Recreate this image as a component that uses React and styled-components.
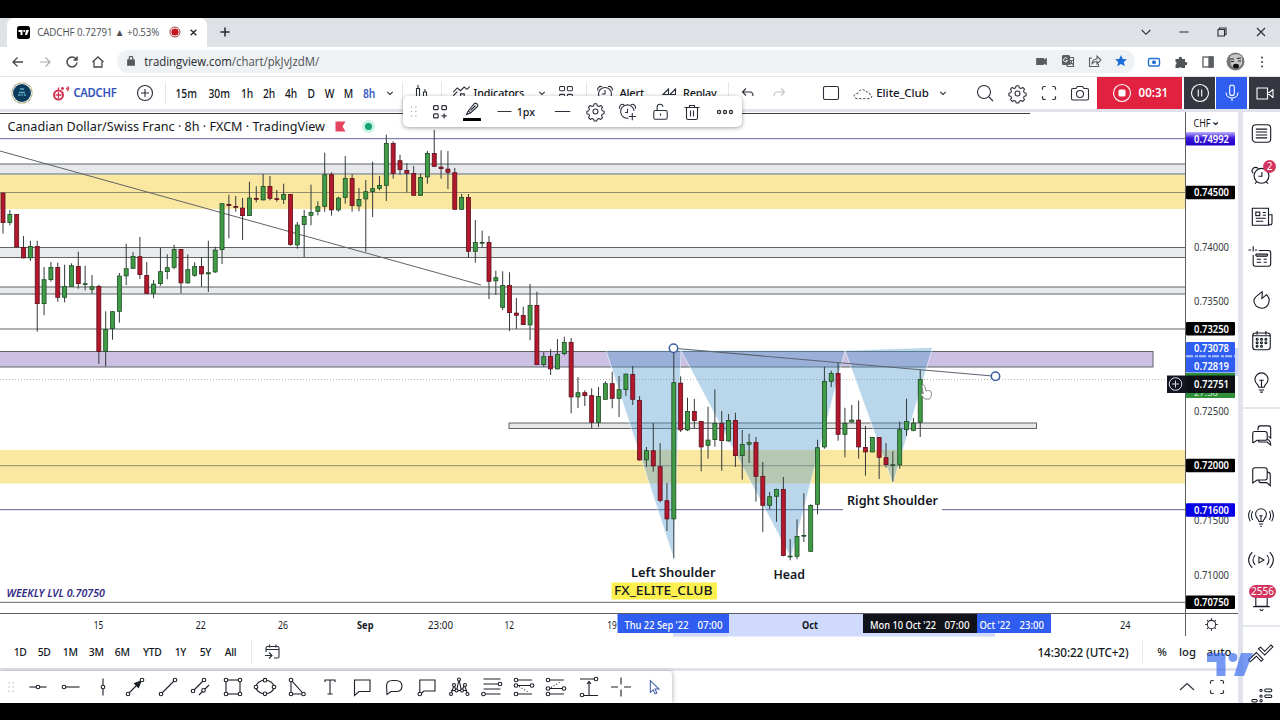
import React from "react";
import styled, { createGlobalStyle } from "styled-components";

const Global = createGlobalStyle`
  *, *::before, *::after { box-sizing: border-box; }
  html, body { margin: 0; padding: 0; background: #000; }
  body { width: 1280px; height: 720px; overflow: hidden; font-family: "Noto Sans", "Open Sans", sans-serif; color: #131722; }
`;

const Screen = styled.div`
  display: flex;
  flex-direction: column;
  width: 1280px;
  height: 720px;
  padding: 18px 0 17px;
  background: #000;
  overflow: hidden;
`;

const TabStrip = styled.header`
  display: flex;
  align-items: stretch;
  flex: 0 0 29px;
  padding-left: 7px;
  background: #dee1e5;
`;

const BrowserTab = styled.div`
  display: flex;
  align-items: center;
  flex: 0 0 200px;
  padding: 0 0 1px 10px;
  background: #fff;
  border-radius: 7px 7px 0 0;
`;

const Favicon = styled.svg`
  display: block;
  flex: none;
`;

const StripControls = styled.div`
  display: flex;
  align-items: center;
  padding-bottom: 2px;
`;

const AddressRow = styled.div`
  display: flex;
  align-items: center;
  flex: 0 0 30px;
  background: #fff;
  border-bottom: 1px solid #e4e6ea;
`;

const Omnibox = styled.div`
  display: flex;
  align-items: center;
  flex: 0 0 1018px;
  height: 23px;
  margin-left: 7px;
  padding-bottom: 1px;
  border-radius: 12px;
  background: #eff2f4;
`;

const TopBar = styled.nav`
  display: flex;
  align-items: center;
  flex: 0 0 32px;
  background: #fff;
`;

const Divider = styled.div`
  flex: 0 0 ${(p) => p.$h || 3}px;
  background: #e0e3eb;
`;

const Workspace = styled.div`
  position: relative;
  display: flex;
  flex: 1;
  min-height: 0;
`;

const MainColumn = styled.main`
  display: flex;
  flex-direction: column;
  width: 1238px;
  background: #fff;
`;

const ChartCanvas = styled.svg`
  display: block;
  flex: 0 0 525px;
  width: 1238px;
  font-family: "Noto Sans", "Open Sans", sans-serif;
`;

const RangeBar = styled.div`
  display: flex;
  align-items: center;
  flex: 0 0 31px;
  padding-bottom: 2px;
`;

const BottomTools = styled.div`
  display: flex;
  align-items: stretch;
  flex: 1;
`;

const DrawingPanel = styled.div`
  display: flex;
  align-items: center;
  flex: 0 0 672px;
  padding-left: 4px;
  border-radius: 0 4px 0 0;
  background: #fff;
  box-shadow: 1px 0 4px rgba(0, 0, 0, 0.25);
`;

const SideBar = styled.aside`
  display: flex;
  flex-direction: column;
  align-items: center;
  width: 42px;
  border-left: 5px solid #e0e3eb;
  background: #fff;
  overflow: hidden;
`;

const SideCell = styled.div`
  position: relative;
  display: flex;
  align-items: center;
  justify-content: center;
  flex: 0 0 ${(p) => p.$h}px;
  width: 37px;
  padding-right: 1px;
  border-bottom: ${(p) => (p.$line ? "2px solid #e4e7ed" : "none")};
`;

const Badge = styled.span`
  position: absolute;
  top: ${(p) => p.$top}px;
  right: ${(p) => p.$right}px;
  height: 13px;
  min-width: 13px;
  padding: 0 ${(p) => p.$pad || 0}px;
  border-radius: 7px;
  background: #d3345f;
  color: #fff;
  font-size: 10px;
  line-height: 13px;
  text-align: center;
`;

const FloatingBar = styled.div`
  position: absolute;
  left: 403px;
  top: -16px;
  z-index: 2;
  display: flex;
  align-items: center;
  width: 339px;
  height: 31px;
  background: #fff;
  border-radius: 5px;
  box-shadow: 0 1px 4px rgba(0, 0, 0, 0.38);
`;

const Watermark = styled.svg`
  position: absolute;
  left: 1207px;
  top: 540px;
  width: 46px;
  height: 25px;
  z-index: 3;
`;

const Cell = styled.div`
  display: flex;
  align-items: center;
  justify-content: center;
  flex: 0 0 ${(p) => p.$w}px;
  min-width: 0;
  margin-left: ${(p) => p.$gap || 0}px;
  height: ${(p) => (p.$bg ? "32px" : "auto")};
  background: ${(p) => p.$bg || "transparent"};
  color: ${(p) => p.$color || "#2a2e39"};
`;

const Label = styled.span`
  flex: none;
  font-family: ${(p) => (p.$browser ? '"Open Sans", "Noto Sans", sans-serif' : "inherit")};
  font-size: ${(p) => p.$size || 12}px;
  font-weight: ${(p) => p.$weight || 500};
  letter-spacing: ${(p) => p.$ls || 0}px;
  color: ${(p) => p.$color || "#131722"};
  line-height: 18px;
  white-space: pre;
  transform: scaleX(${(p) => p.$sx || 1});
`;

const Rule = styled.i`
  flex: 0 0 1px;
  height: 22px;
  margin-left: ${(p) => p.$gap}px;
  background: #e4e7ed;
`;

const Avatar = styled.div`
  display: flex;
  align-items: center;
  justify-content: center;
  width: 22px;
  height: 22px;
  border-radius: 50%;
  background: #0d3b5c;
  border: 1px solid #e9dca6;
  box-shadow: inset 0 0 0 1px #fff;
`;

const IconSvg = styled.svg`
  display: block;
  flex: none;
  overflow: visible;
  fill: none;
  stroke: currentColor;
  stroke-width: ${(p) => p.$sw || 1.1};
`;

const Dot = ({ x, y, r = 1.8 }) => <circle cx={x} cy={y} r={r} fill="#fff" />;

const glyphs = {
  back: <path d="M17 12H7M11.500 7.500 7 12l4.500 4.500" />,
  forward: <path d="M7 12h10M12.500 7.500 17 12l-4.500 4.500" />,
  reload: <path d="M16.200 9.200A5 5 0 1 0 17 12.500M17 6.500v3.500h-3.500" />,
  home: <path d="M8 11.500V17h8v-5.500M6.500 12 12 7l5.500 5" />,
  lock: (
    <g>
      <rect x="8.500" y="11" width="7" height="5.500" fill="currentColor" />
      <path d="M10 11V9a2 2 0 0 1 4 0v2" />
    </g>
  ),
  close: <path d="m8 8 8 8M16 8l-8 8" />,
  plus: <path d="M12 7v10M7 12h10" />,
  chevron: <path d="m9 10.800 3 2.800 3-2.800" />,
  wideChevron: <path d="m7.700 10 4.300 4.300L16.300 10" />,
  minus: <path d="M7.500 12h9" />,
  restore: <path d="M8 9.500h6.500V16H8zM9.500 9.500V8H16v6.500h-1.500" />,
  camcorder: <path d="M7 9h7v2l3-2v6l-3-2v2H7z" fill="currentColor" />,
  translate: (
    <g>
      <rect x="6.500" y="6.500" width="7" height="9" rx="1" fill="currentColor" />
      <path d="M13.500 8.500h4v9h-6l-1-2M14 11.500h3M15.500 11v1.500c0 1.500-1 2.500-1.500 3M14.500 13l2.500 2.500" />
      <path d="M11.300 9.800a2 2 0 1 0 .2 1.700h-1.500" stroke="#fff" strokeWidth=".9" />
    </g>
  ),
  share: <path d="M9 9H6.500v8.500h9V15M9 14.500c.5-3 2.500-4.500 5-4.500V7l4 4-4 4v-2.500c-2 0-3.500.5-5 2z" />,
  star: <path d="m12 6 1.800 3.900 4.200.4-3.200 2.800 1 4.200L12 15.100l-3.800 2.200 1-4.200L6 10.300l4.200-.4z" fill="currentColor" stroke="none" />,
  viewer: (
    <g>
      <rect x="6.500" y="8.500" width="11" height="7.500" rx="1.500" />
      <circle cx="12" cy="12.200" r="2" fill="currentColor" stroke="none" />
    </g>
  ),
  puzzle: <path d="M6.500 9h3.300a1.700 1.700 0 1 1 3.200 0H16v3a1.700 1.700 0 1 1 0 3.200V18h-3.300a1.500 1.500 0 0 0-2.700 0H6.500v-3.300a1.600 1.600 0 0 0 0-3z" fill="currentColor" stroke="none" />,
  panel: (
    <g>
      <rect x="7" y="7" width="10" height="10" />
      <rect x="13" y="7" width="4" height="10" fill="currentColor" />
    </g>
  ),
  kebab: (
    <g fill="currentColor" stroke="none">
      <circle cx="12" cy="7.500" r="1.100" /><circle cx="12" cy="12" r="1.100" /><circle cx="12" cy="16.500" r="1.100" />
    </g>
  ),
  circlePlus: (
    <g><circle cx="12" cy="12" r="7.500" /><path d="M12 8v8M8 12h8" /></g>
  ),
  candles: <path d="M6.500 7.500h3v8h-3zM8 4v3.500M8 15.500V18M13.500 11h3v5h-3zM15 8v3M15 16v3" />,
  indicators: <path d="m3.500 11 4.500-4.500 3.500 3L15.500 5.500l3 2.500L21.500 5M3.500 15l4.500-4.500M11.500 19v-6h4v6" />,
  layouts: (
    <g>
      <rect x="5" y="5" width="5.500" height="4.500" rx="1" /><rect x="13.500" y="5" width="5.500" height="4.500" rx="1" />
      <rect x="5" y="13.500" width="5.500" height="4.500" rx="1" /><rect x="13.500" y="13.500" width="5.500" height="4.500" rx="1" />
    </g>
  ),
  template: (
    <g>
      <rect x="5" y="5" width="5" height="4.500" rx="1" /><rect x="14" y="5" width="5" height="4.500" rx="1" />
      <rect x="5" y="14" width="5" height="4.500" rx="1" /><path d="M16.500 13.500v5.500M13.700 16.200h5.600" />
    </g>
  ),
  alarm: (
    <g>
      <circle cx="12" cy="13" r="6.500" /><path d="M12 9v4H9M4.800 9.500a3 3 0 0 1 4-3.800M19.200 9.500a3 3 0 0 0-4-3.800M7.500 18l-1.500 2M16.500 18l1.500 2" />
    </g>
  ),
  alarmPlus: (
    <g>
      <path d="M18.800 11.500A7 7 0 1 0 13 19M12 9v4H9.500M4 9.500a3.300 3.300 0 0 1 4.500-4.500M20 9.500A3.300 3.300 0 0 0 15.500 5M17 13.500v7.500M13.300 17.200h7.500" />
    </g>
  ),
  rewind: <path d="M11.500 8 6 13.500h5.500zM18.500 8 13 13.500h5.500z" />,
  undo: <path d="M10 7.500 6.500 11l3.500 3.500M6.500 11H14c2 0 3 1.500 3 4" />,
  redo: <path d="M14 7.500 17.500 11 14 14.500M17.500 11H10c-2 0-3 1.500-3 4" />,
  square: <rect x="4.500" y="5.500" width="15" height="13" rx="1.500" />,
  cloud: <path d="M5.500 18.500c-6-.8-5-6.500.5-6.500 1-5.500 8-6.500 10.500-2 3-.5 4.500 1 4.500 3 4 1 3.500 5-.5 5.500z" strokeDasharray="3 2" />,
  search: <g><circle cx="11" cy="11" r="6.500" /><path d="m16 16 4 4" /></g>,
  gear: (
    <g>
      <circle cx="12" cy="12" r="2.600" />
      <path d="m10.300 4.500.4-.5h2.600l.6 2 1.600.7 2-1 1.800 1.800-1 2 .7 1.600 2 .6v2.600l-2 .6-.7 1.600 1 2-1.800 1.800-2-1-1.600.7-.6 2h-2.600l-.6-2-1.600-.7-2 1-1.800-1.800 1-2-.7-1.600-2-.6v-2.600l2-.6.7-1.600-1-2 1.800-1.800 2 1 1.600-.7z" strokeLinejoin="round" />
    </g>
  ),
  fullscreen: <path d="M9 6H7.500A1.500 1.500 0 0 0 6 7.500V9M15 6h1.500A1.500 1.500 0 0 1 18 7.500V9M9 18H7.500A1.500 1.500 0 0 1 6 16.500V15M15 18h1.500a1.500 1.500 0 0 0 1.500-1.500V15" />,
  camera: <g><path d="M5 7.500h3L9.500 5.500h5l1.500 2h3A1.500 1.500 0 0 1 20.500 9v8.500A1.500 1.500 0 0 1 19 19H5a1.500 1.500 0 0 1-1.500-1.500V9A1.500 1.500 0 0 1 5 7.500z" /><circle cx="12" cy="13" r="3.500" /></g>,
  record: <g><circle cx="12" cy="12" r="8.500" /><rect x="9" y="9" width="6" height="6" rx="1" fill="currentColor" /></g>,
  pause: <g><circle cx="12" cy="12" r="8.500" /><path d="M10.300 8.500v7M13.700 8.500v7" /></g>,
  mic: <g><rect x="9.700" y="4" width="4.600" height="10.500" rx="2.300" /><path d="M6 11.500c0 7.300 12 7.300 12 0M12 17v3" /></g>,
  video: <path d="M4 7h10.500v11H4zM14.500 11.500h2l3.500-3v8l-3.500-3h-2" strokeLinejoin="round" />,
  pencil: <g><path d="m8.500 10.500 6-7a1.500 1.500 0 0 1 2 0l1 1a1.500 1.500 0 0 1 0 2l-7 6.500-4 1.500zM8.500 10.500l2 2.500M10.500 10.500l5-5" /><rect x="3" y="18" width="18" height="3" rx=".5" fill="#000" stroke="none" /></g>,
  line: <path d="M4 12h16" />,
  unlock: <g><rect x="5" y="11" width="14" height="9" rx="1.500" /><path d="M8.500 11V7.500c0-3.800 5.500-4 6-.5M12 14v2.500" /></g>,
  trash: <path d="M4.500 7.500h15M9.500 7.500v-2h5v2M6.500 7.500V18A1.500 1.500 0 0 0 8 19.500h8a1.500 1.500 0 0 0 1.500-1.500V7.500M10.500 10.500v6M13.500 10.500v6" />,
  more: <g><circle cx="5.500" cy="12" r="1.700" /><circle cx="12" cy="12" r="1.700" /><circle cx="18.500" cy="12" r="1.700" /></g>,
  grip: (
    <g fill="#a5a9b3" stroke="none">
      {[7, 12, 17].map((y) => (
        <g key={y}><rect x="9" y={y - 0.7} width="1.400" height="1.400" /><rect x="14" y={y - 0.7} width="1.400" height="1.400" /></g>
      ))}
    </g>
  ),
  list: <g><rect x="1.500" y="2" width="21" height="20" rx="4" /><path d="M5.500 7h13M5.500 10.300h13M5.500 13.700h13M5.500 17h13" /></g>,
  alarmSide: <g><circle cx="12" cy="13.500" r="8.500" /><path d="M12.500 9v5H8.500M2.500 10.500A3.500 3.500 0 0 1 8 5M6.500 20.500l-2 2M17.500 20.500l2 2" /></g>,
  news: <g><path d="M1.500 2.500h18.500V22H1.500zM20 10h4v9.500c0 3-4 3-4 0M13.500 7.500H17M13.500 10.500H17M5.500 14H17M5.500 17.500H14" /><rect x="5.500" y="7" width="4.500" height="4" /></g>,
  data: <g><path d="M9 4h11a2.500 2.500 0 0 1 2.500 2.500v13A2.500 2.500 0 0 1 20 22H5a2.500 2.500 0 0 1-2.500-2.500V9M2.500-1v6M0 3.500H-3M4.500 3.500H7M6.500 14h5M14.500 14H18M6.500 17.500h5M14.500 17.500H18" /><rect x="5.500" y="8" width="13.500" height="2.500" rx="1" fill="#999" /></g>,
  flame: <path d="M12 22a8.700 8.700 0 0 1-8.700-9c.3-4 4.500-5.500 9.500-10 .3 3 0 5-.5 8l5.500-4.500c6 6 2 15.500-5.800 15.500z" strokeLinejoin="round" />,
  calendar: <g><rect x="2" y="3.500" width="20" height="19" rx="3" /><path d="M7 1v4.500M17 1v4.500M2 6.500h20" />{[10.5, 14.5, 18.5].map((y) => [7, 12, 17].map((x) => (y === 18.5 && x === 17 ? null : <circle key={`${x}-${y}`} cx={x} cy={y} r="1.100" />)))}</g>,
  bulb: <g><path d="M9 17.500c0-3-4.500-4-4.500-9a7.500 7.500 0 0 1 15 0c0 5-4.500 6-4.500 9zM9 20.500h6M10.500 23h3M12 17.500V10M9.500 9.500h5" /></g>,
  chats: <g><path d="M8 6V4C8 2.300 9 1 10.500 1H20c1.500 0 2.500 1 2.500 2.500V15l-2.500-2" /><path d="M4 7.500h12C17.500 7.500 18.500 8.500 18.500 10v6.500c2.500.3 4 1.500 4 6.500l-4-3.500H10c-1 0-1.500-.8-1.500-1.500M2 20.500V9.500c0-1.300.7-2 2-2M2 20.500 7 17.500h9.500c1.300 0 2-1 2-2" /></g>,
  chat: <g><path d="M2 19.500V4.500C2 3 3 2 4.500 2h11.500C17.500 2 18.500 3 18.500 4.500v9c0 1.500-1 2.500-2.500 2.500H7z" /><path d="M18.500 7c2.500 0 3.500 1 3.500 2.500v13L18 19h-7c-1.500 0-2-1-2-3" /></g>,
  ideas: <g><path d="M9.500 17.500c0-3-4-4-4-9a6.500 6.500 0 0 1 13 0c0 5-4 6-4 9zM9.500 20.500h5M11 23h2M12 17.500v-6.500M10 10.500h4M2 5c-2 3.500-2 7 0 10.500M-.8 3.500c-2.800 4.500-2.800 9 0 13.500M22 5c2 3.500 2 7 0 10.500M24.800 3.500c2.800 4.500 2.800 9 0 13.500" /></g>,
  broadcast: <path d="M9.500 8.500v7l6-3.500zM5 6c-3.500 4-3.500 8 0 12M1.500 2.500c-5.500 6-5.500 13 0 19M19 6c3.500 4 3.500 8 0 12M22.500 2.500c5.500 6 5.500 13 0 19" />,
  bell: <path d="M5.500 7v11.500h13V7M2.500 19h19M10 22c1 2 3 2 4 0" />,
  doubleChevron: <path d="m-3 18 9.500-9 8 8.500-2.300 2-5.700-6-7.500 6.700zM9 4.500l2.500-2 5 5L24 0l2.300 2.200L16.500 12z" />,
  apps: <g><circle cx="12" cy="4" r="1.400" /><circle cx="12" cy="11" r="1.400" /><rect x="16.500" y="2.500" width="8.500" height="3.200" rx="1.500" /><rect x="16.500" y="9.500" width="8.500" height="3.200" rx="1.500" /><rect x="1" y="15" width="6.500" height="3" rx="1.500" /><circle cx="12" cy="16.500" r="1.400" /><rect x="1" y="21" width="6.500" height="3" rx="1.500" /><circle cx="12" cy="22.500" r="1.400" /></g>,
  sun: <g><circle cx="12" cy="12" r="5" /><path d="M12 4.500v2.500M12 17v2.500M4.500 12h2.500M17 12h2.500M6.700 6.700 8.500 8.500M15.500 15.500l1.800 1.800M17.300 6.700l-1.800 1.800M8.500 15.500l-1.800 1.800" /></g>,
  gotoDate: <path d="M6 12V8A1.500 1.500 0 0 1 7.500 6.500h10A1.500 1.500 0 0 1 19 8v8.500a1.500 1.500 0 0 1-1.500 1.500H14M6 9.500H19M9.500 4.500v3M16 4.500v3M5 15.500h6.500M9 12.500l3 3-3 3" />,
  up: <path d="m5 15 7-6.500 7 6.500" />,
  hLine: <g><path d="M3.500 12h17" /><Dot x="12" y="12" /></g>,
  hRay: <g><path d="M5 12h15.500" /><Dot x="5" y="12" /></g>,
  vLine: <g><path d="M12 3.500v17" /><Dot x="12" y="12" /></g>,
  arrow: <g><path d="m5 19 14-14" /><path d="m18 6-6.500 2.500 4 4z" fill="currentColor" /><Dot x="5" y="19" /><Dot x="19" y="5" /></g>,
  trend: <g><path d="m5 19 14-14" /><Dot x="5" y="19" /><Dot x="19" y="5" /></g>,
  channel: <g><path d="M5 16 16 5M11 20l10-10" /><Dot x="5" y="16" /><Dot x="16" y="5" /><Dot x="15.500" y="15.300" /></g>,
  rectTool: <g><rect x="5" y="5" width="14" height="14" /><Dot x="5" y="5" /><Dot x="19" y="5" /><Dot x="5" y="19" /><Dot x="19" y="19" /></g>,
  ellipse: <g><ellipse cx="12" cy="12" rx="9" ry="6.800" /><Dot x="3" y="12" /><Dot x="21" y="12" /><Dot x="12" y="5.200" /><Dot x="12" y="18.800" /></g>,
  triangle: <g><path d="M6 5v14h12.500z" /><Dot x="6" y="5" /><Dot x="6" y="19" /><Dot x="18.500" y="19" /></g>,
  textTool: <path d="M7 7V5h10v2M12 5v14M9.500 19h5" />,
  comment: <path d="M4.500 5h15.500v11.500H9l-4.500 4z" />,
  bubble: <path d="M5 19.500 4.500 11c0-3.500 2-5.500 6-5.500h3c4 0 6.500 2 6.500 5.500s-2.500 5.500-6 5.500H9z" />,
  callout: <g><path d="M4.800 18V5h15.200v11h-11L6 18.500" /><Dot x="4.800" y="19" /></g>,
  pattern: <g><path d="M4 19 7 10.500 9.500 16 12 4.500 14.500 16l3-6 3 9M4 15.500h16" /><Dot x="4" y="19" r="1.500" /><Dot x="7" y="10" r="1.500" /><Dot x="9.500" y="15.500" r="1.500" /><Dot x="12" y="4.500" r="1.500" /><Dot x="15" y="15.500" r="1.500" /><Dot x="18" y="10" r="1.500" /><Dot x="20.500" y="19" r="1.500" /></g>,
  levels: <g><path d="M3.500 4h17M3.500 9h17M3.500 14h17M3.500 19h17" /><Dot x="20" y="9" /><Dot x="3.500" y="19" /></g>,
  fibDown: <g><path d="M4 5h16M4 10.500h16M4 19h16" /><path d="m7 11.500 10 6" strokeDasharray="1 2" /><Dot x="4" y="5" /><Dot x="4" y="10.500" /><Dot x="20" y="10.500" /><Dot x="4" y="19" /></g>,
  fibUp: <g><path d="M4 5h16M4 13.500h16M4 19h16" /><path d="m7 12.500 10-6" strokeDasharray="1 2" /><Dot x="4" y="5" /><Dot x="4" y="13.500" /><Dot x="20" y="13.500" /><Dot x="4" y="19" /></g>,
  range: <g><path d="M3 4h16M5 20.500h16M12 7v13M10 9l2-2.500L14 9" /><Dot x="19" y="4" /><Dot x="5" y="20" /></g>,
  cross: <path d="M2 12h7M15 12h7M12 2.500v7M12 14.500v7" />,
  cursor: <path d="M8 5v13l3.200-2.800 2 4.300 2-1-2-4.200H17.500z" />,
};

const Icon = ({ name, size = 24, sw }) => (
  <IconSvg width={size} height={size} viewBox="0 0 24 24" $sw={sw} aria-hidden="true">
    {glyphs[name]}
  </IconSvg>
);

const IconCell = ({ name, w = 24, gap, size = 24, color, sw, bg }) => (
  <Cell $w={w} $gap={gap} $color={color} $bg={bg}><Icon name={name} size={size} sw={sw} /></Cell>
);

const TextCell = ({ w, gap, children, ...rest }) => (
  <Cell $w={w} $gap={gap}><Label {...rest}>{children}</Label></Cell>
);

/* upper wick, body top, body bottom, lower wick, direction */
const candles = [
  [192.7,192.7,223,233.7,"r"],[210,214,223,225.3,"g"],[214,214,247.3,247.3,"r"],[236,247,258.3,258.3,"r"],
  [240.7,246,258.3,261,"g"],[240.7,246,304,331.7,"r"],[267,279.3,304,315.3,"g"],[262,267,280,281.7,"g"],
  [262.7,267,297.7,301.7,"r"],[264.7,286,297.7,302.3,"g"],[263.3,265.3,286.7,286.7,"g"],[251.7,266,284,288.7,"r"],
  [265.7,283.3,284.3,290.3,"g"],[275,286.3,289.7,293.7,"g"],[284.7,286,351.7,364,"r"],[311.3,329,351.7,366.7,"g"],
  [311.3,311.3,329,339.7,"g"],[273,275.7,311.7,322.7,"g"],[243.7,268.3,276.3,285,"g"],[252,256,268.7,268.7,"g"],
  [237,256.3,275,279,"r"],[262,275,293.7,293.7,"r"],[280,283.7,293.7,298.3,"g"],[248,271.3,284,285.7,"g"],
  [254.3,267.3,272,279.3,"g"],[244.7,249,267.7,269.3,"g"],[249,249,283.3,293.3,"r"],[254.3,269.3,283.3,283.7,"g"],
  [262.3,266,275.7,276.7,"g"],[257,266,274.3,286.7,"r"],[240.7,272.3,274.3,292,"g"],[246.7,249.7,272.3,273,"g"],
  [203.3,203.3,250,264,"g"],[194.7,204,206,238.3,"r"],[196,206,207.7,211.7,"r"],[198,207.7,216,240,"r"],
  [181.7,197.7,216,216,"g"],[186.3,198,199.7,202.3,"r"],[174,186,200.3,200.3,"g"],[176,186,198.7,200.3,"r"],
  [190,198.3,199.7,201.7,"r"],[183.7,194,199.7,204,"g"],[194,194,245,245.7,"r"],[222,224.7,245.3,248.7,"g"],
  [210,216,225,257,"g"],[184.7,212,215.7,225.3,"g"],[201.3,206.3,211.7,215.3,"g"],[152.7,174.3,206.7,211.7,"g"],
  [172.3,174.3,210.3,215.7,"r"],[196.7,197.7,210.3,211.7,"g"],[156,178,198,203.7,"g"],[174,178,206,211.7,"r"],
  [188,199,206.3,211.3,"g"],[180,191.3,199.3,251.7,"g"],[161.7,188.3,192,217,"g"],[176,185,188.7,190.3,"g"],
  [134.7,143,185.7,201,"g"],[141.3,143,174,178.7,"r"],[154.7,160.3,170,174.7,"r"],[163,170,173.7,192.3,"r"],
  [166,173,195.7,195.7,"r"],[173.7,177,195.7,195.7,"g"],[151,153,177.3,183.7,"g"],[130,153,166.7,166.7,"r"],
  [150.3,166.7,169,178.7,"r"],[151,168.7,172.7,189,"r"],[168,172.3,209.7,209.7,"r"],[194,197,209.7,209.7,"g"],
  [194,197,251.7,257.7,"r"],[220,242,251.7,262.7,"g"],[230.7,242,242.7,247.3,"g"],[236,242,281.7,299,"r"],
  [270.7,277.3,281.3,295,"g"],[271.3,285,307.7,310,"g"],[272.3,285,313,331,"r"],[298,312.7,315.7,329,"r"],
  [306.7,315,325,325,"r"],[284,305,325.3,340.3,"g"],[291.7,305,365,365,"r"],[352,356.3,365,367,"g"],
  [349.3,356,369.3,375,"r"],[339,354,369.3,369.3,"g"],[336.7,342,354,355.3,"g"],[338,342,397.3,413.3,"r"],
  [377,392.3,397.3,408,"g"],[390.3,392.3,396,406,"r"],[388.3,395.3,422.7,428.3,"r"],[387,396,422.7,427,"g"],
  [381.3,383.3,399.7,399.7,"g"],[371.7,383.3,398.7,408.3,"r"],[376,389.3,398.7,417,"g"],[373.7,373.7,390,396,"g"],
  [366,374,399.7,405,"r"],[396,400,460.3,460.7,"r"],[447,450.3,460.3,467,"g"],[423,450.3,466.3,471.7,"r"],
  [443,466.3,500.7,502.3,"r"],[483,500.3,519.3,531,"r"],[348,382.3,519.3,558.3,"g"],[376.3,382.7,430.3,432,"r"],
  [397.7,411,430.3,431,"g"],[399,411,421,428.3,"r"],[421,421,447.3,471.3,"r"],[406.7,439.7,445.7,458.7,"g"],
  [389.3,423,440,446.7,"g"],[411,423,441,470.7,"r"],[414,420,441.3,441.7,"g"],[412.7,420,456,467,"r"],
  [430,444,456,479.7,"g"],[433.7,442,444.7,463,"g"],[437,442,476.7,501.7,"r"],[462,476,505.7,532,"r"],
  [492,496.3,505.7,509.3,"g"],[488.7,489,496.7,521.7,"g"],[477,489,556,556.3,"r"],[539,555.7,556.7,560.3,"g"],
  [519.3,536,556.7,559.3,"g"],[493.3,535,536.3,542,"g"],[504.3,505,551.7,552,"g"],[439.7,447.3,504.7,514.3,"g"],
  [366.7,381,447.3,448.7,"g"],[370.7,373,381.7,387,"g"],[362,373,434.7,440.7,"r"],[407.7,423,434.7,457.3,"g"],
  [405,419.7,422.3,422.7,"g"],[400.7,419.7,447.3,458.7,"r"],[426,447,452.3,475.7,"r"],[437,437,452.3,452.3,"g"],
  [437,437,457.7,479,"r"],[443,457.3,465,467.7,"r"],[451.3,464.3,465.7,481.7,"g"],[421.7,429.3,465.3,468.7,"g"],
  [398.7,421,430,436,"g"],[418,422.7,430.7,431.3,"g"],[369.3,379,422.7,437,"g"],
];

const Candle = ({ x, data: [hi, top, bottom, lo, dir] }) => {
  const height = Math.max(bottom - top - 0.8, 0.8);
  return (
    <g>
      <path d={`M${x} ${hi}V${lo}`} stroke="#333a3c" strokeWidth="1" />
      <rect x={x - 2} y={top + 0.4} width="4" height={height} fill={dir === "g" ? "#409c46" : "#b3182c"} stroke={dir === "g" ? "#1d4a22" : "#5c0f1c"} strokeWidth=".8" />
    </g>
  );
};

const Fit = ({ x, y, w, size = 11, fill = "#131722", children, ...rest }) => (
  <text x={x} y={y} textLength={w} lengthAdjust="spacingAndGlyphs" fontSize={size} fill={fill} {...rest}>{children}</text>
);

const priceTicks = [["0.74000", 247], ["0.73500", 301.5], ["0.72500", 410.7], ["0.71500", 520.5], ["0.71000", 575]];
const priceTags = [
  ["0.74500", 192.5, "#000"], ["0.73250", 328.7, "#000"], ["0.72000", 465.5, "#000"], ["0.71600", 510, "#0500e6"], ["0.70750", 602.3, "#000"],
];
const timeTicks = [["15", 93.7, 9.5], ["22", 195.7, 10], ["26", 278, 10], ["Sep", 357, 16.5, true], ["23:00", 428, 25], ["12", 504.5, 9.5], ["19", 607.3, 9.5], ["24", 1120, 10.5]];

const PriceTag = ({ label, y, fill, h = 13.5 }) => (
  <g>
    <rect x="1186" y={y - h / 2} width="49" height={h} rx="1" fill={fill} />
    <Fit x="1194" y={y + 3.9} w="35" size="10.500" fill="#fff" fontWeight="600">{label}</Fit>
  </g>
);

const Chart = () => (
  <ChartCanvas viewBox="0 112 1238 525" preserveAspectRatio="none">
    <defs>
      <linearGradient id="topTag" x1="0" x2="0" y1="0" y2="1">
        <stop offset="0" stopColor="#bdb2ff" /><stop offset=".45" stopColor="#3a17d8" /><stop offset="1" stopColor="#2200c8" />
      </linearGradient>
      <clipPath id="plot"><rect x="0" y="112" width="1185" height="501" /></clipPath>
    </defs>
    <rect x="0" y="112" width="1238" height="525" fill="#fff" />
    <g clipPath="url(#plot)">
      <g stroke="#5f6467" strokeWidth="1">
        <path d="M0 113.500H1030" stroke="#3c3c3c" />
        <path d="M0 138.700H1185" stroke="#68649c" />
        <rect x="-2" y="164" width="1190" height="10" fill="#e6e8eb" />
        <rect x="-2" y="247.500" width="1190" height="10" fill="#e9eaec" />
        <rect x="-2" y="287" width="1190" height="7" fill="#e9eaec" />
        <rect x="-2" y="175" width="1190" height="34" fill="#fae8a0" stroke="none" />
        <rect x="-2" y="450" width="1190" height="33.500" fill="#fae8a0" stroke="none" />
        <path d="M0 192.500H1185M0 465.700H1185" stroke="#958e6c" />
        <path d="M0 329H1185M0 602.300H1185" />
        <path d="M0 509.700H1185" stroke="#5b6190" />
        <rect x="-2" y="351.500" width="1155" height="15.500" fill="#ccc0e3" />
        <rect x="509" y="423" width="527.500" height="5.500" fill="#e7e7ea" />
      </g>
      <path d="M0 379.500H1185" stroke="#b3b7ae" strokeDasharray="1 2" />
      <path d="M0 151 481 285" stroke="#606465" strokeWidth="1" />
      <g fill="rgba(80,152,202,.4)" stroke="#fff" strokeOpacity=".7" strokeWidth=".8">
        <path d="M606 350.500H681L673.500 558z" />
        <path d="M681 350.500H845L791 558z" />
        <path d="M845 350.500 932.500 347.500 893 484z" />
      </g>
      {candles.map((c, i) => <Candle key={i} x={3 + 6.845 * i} data={c} />)}
      <path d="M673.500 348.300 995.500 376.300" stroke="#5c6470" strokeWidth="1.100" />
      <g fill="#fff" stroke="#3c5c9c" strokeWidth="1.500"><circle cx="673.500" cy="348.300" r="4.200" /><circle cx="995.500" cy="376.300" r="4.200" /></g>
      <rect x="843" y="494" width="99" height="18" fill="#fff" />
      <Fit x="847" y="505.300" w="91" size="12" fontWeight="600">Right Shoulder</Fit>
      <Fit x="631" y="577" w="84.500" size="12" fontWeight="600">Left Shoulder</Fit>
      <Fit x="773.500" y="578.500" w="31.500" size="12" fontWeight="600">Head</Fit>
      <rect x="611.500" y="582.500" width="105.500" height="17" fill="#fbf04e" />
      <Fit x="614" y="594.900" w="98.500" size="12" fontWeight="500">FX_ELITE_CLUB</Fit>
      <Fit x="6.500" y="597" w="98.500" size="10.500" fill="#332b86" fontWeight="600" fontStyle="italic">WEEKLY LVL 0.70750</Fit>
      <Fit x="7.500" y="131" w="317.500" size="12.500" fontWeight="400">Canadian Dollar/Swiss Franc · 8h · FXCM · TradingView</Fit>
      <path d="M335.500 121.500h10l-3 5 3 5h-10z" fill="#e6455f" />
      <circle cx="368.500" cy="126.500" r="6.500" fill="#c9f3e4" /><circle cx="368.500" cy="126.500" r="3.500" fill="#14a273" />
      <path d="M922 386.500c.2-2 2.400-2 2.800 0l1.200 4.500c1.500-1 4.200-.3 5.200.7.800 2.500-.2 5.300-1.400 7.300h-5l-3.500-4c-.5-1.500 1-2 2-1z" fill="#fff" stroke="#8b8b8b" />
    </g>
    <path d="M1185.500 112V636M0 613.500H1238" stroke="#5b5e63" />
    <Fit x="1193.500" y="127.300" w="17" size="10.500">CHF</Fit>
    <path d="m1213.500 122.500 2.200 2 2.200-2" fill="none" stroke="#131722" strokeWidth="1.200" />
    {priceTicks.map(([label, y]) => <Fit key={label} x="1194" y={y + 3.9} w="35" size="10.500" fill="#353941">{label}</Fit>)}
    <rect x="1235" y="348" width="3" height="28" fill="#cdd8fb" />
    <PriceTag label="0.74992" y={138.8} fill="url(#topTag)" />
    {priceTags.map(([label, y, fill]) => <PriceTag key={label} label={label} y={y} fill={fill} />)}
    <rect x="1186" y="352" width="49" height="10" fill="#3561f1" />
    <path d="M1186 356.200H1235" stroke="#a9c2fb" strokeWidth="2" strokeDasharray="7 2 3 1" />
    <PriceTag label="0.73078" y={348.2} fill="#2f5df0" h={12.5} />
    <PriceTag label="0.72819" y={365.6} fill="#2f5df0" h={14} />
    <rect x="1186" y="373" width="49" height="25" fill="#2e8f38" />
    <Fit x="1194" y="395.500" w="24" size="8" fill="#c9e7cb">27:38</Fit>
    <rect x="1167" y="375.500" width="19" height="17.500" fill="#131722" />
    <g fill="none" stroke="#d9dadc"><circle cx="1175.500" cy="384" r="6.300" /><path d="M1172 384h7M1175.500 380.500v7" /></g>
    <PriceTag label="0.72751" y={384.2} fill="#0d1015" h={17.5} />

    {timeTicks.map(([label, x, w, bold]) => (
      <Fit key={label} x={x} y="629" w={w} size="10.500" fontWeight={bold ? 700 : 400}>{label}</Fit>
    ))}
    <rect x="673" y="614" width="322" height="22.500" fill="#cfdafc" />
    <Fit x="802" y="629" w="16" size="10.500" fontWeight="700">Oct</Fit>
    <rect x="617.500" y="614" width="111.500" height="19" fill="#2f5df0" />
    <Fit x="624.500" y="629" w="64" size="10.500" fill="#fff" fontWeight="500">Thu 22 Sep '22</Fit>
    <Fit x="697.500" y="629" w="25" size="10.500" fill="#fff" fontWeight="500">07:00</Fit>
    <rect x="977" y="614" width="74" height="19" fill="#2f5df0" />
    <Fit x="979.500" y="629" w="31" size="10.500" fill="#fff" fontWeight="500">Oct '22</Fit>
    <Fit x="1019.500" y="629" w="24.500" size="10.500" fill="#fff" fontWeight="500">23:00</Fit>
    <rect x="863" y="614" width="114" height="19" fill="#101319" />
    <Fit x="870" y="629" w="66" size="10.500" fill="#fff" fontWeight="500">Mon 10 Oct '22</Fit>
    <Fit x="944.500" y="629" w="25" size="10.500" fill="#fff" fontWeight="500">07:00</Fit>
    <svg x="1201.500" y="614.500" width="20" height="20" viewBox="0 0 24 24" fill="none" stroke="#2a2e39" strokeWidth="1.300">{glyphs.sun}</svg>
  </ChartCanvas>
);

const drawTools = ["hLine", "hRay", "vLine", "arrow", "trend", "channel", "rectTool", "ellipse", "triangle", "textTool", "comment", "bubble", "callout", "pattern", "levels", "fibDown", "fibUp", "range", "cross"];
const intervals = [["15m", 21, 10], ["30m", 22, 11], ["1h", 12, 11], ["2h", 12, 10], ["4h", 12, 10], ["D", 8, 10], ["W", 11, 9], ["M", 9, 9], ["8h", 13, 10, "#3a5bc4"]];
const ranges = [["1D", 13, 14], ["5D", 13, 11], ["1M", 14, 12.5], ["3M", 14, 12], ["6M", 15, 11], ["YTD", 21, 12], ["1Y", 12, 12], ["5Y", 13, 12], ["All", 13, 12]];
const sideItems = [
  ["list", 42], ["alarmSide", 40], ["news", 44], ["data", 38], ["flame", 46], ["calendar", 36], ["bulb", 51, true], ["chats", 53], ["chat", 28], ["ideas", 54], ["broadcast", 32], ["bell", 51, true], ["doubleChevron", 55], ["apps", 30],
];
const compactIcons = ["doubleChevron", "ideas", "broadcast", "apps"];

export default function App() {
  return (
    <Screen>
      <Global />
      <TabStrip>
        <BrowserTab>
          <Favicon width="13" height="13" viewBox="0 0 13 13"><rect width="13" height="13" rx="2.500" fill="#000" /><path d="M1.500 4h4v5H3.500V6h-2zM9 4h3l-2 5H8z" fill="#fff" /><circle cx="7.200" cy="5" r="1" fill="#fff" /></Favicon>
          <TextCell w={122} gap={7} $browser $size={10.3} $weight={400} $color="#4c4f54" $ls={-0.1} $sx={0.95}>CADCHF 0.72791 ▲ +0.53%</TextCell>
          <Cell $w={14} $gap={9}><svg width="12" height="12" viewBox="0 0 12 12"><circle cx="6" cy="6" r="5" fill="none" stroke="#a63b40" /><circle cx="6" cy="6" r="3.600" fill="#c41521" /></svg></Cell>
          <IconCell name="close" w={16} gap={3} size={17} sw={2} />
        </BrowserTab>
        <StripControls>
          <IconCell name="plus" w={24} gap={6} size={22} sw={1.7} />
          <IconCell name="wideChevron" w={24} gap={897} size={24} />
          <IconCell name="minus" w={24} gap={14} />
          <IconCell name="restore" w={24} gap={14} />
          <IconCell name="close" w={24} gap={15} />
        </StripControls>
      </TabStrip>
      <AddressRow>
        <IconCell name="back" gap={6} sw={1.3} color="#45484d" />
        <IconCell name="forward" gap={3} sw={1.2} color="#a9acb0" />
        <IconCell name="reload" gap={3} sw={1.5} color="#45484d" />
        <IconCell name="home" gap={2} sw={1.3} color="#45484d" />
        <Omnibox>
          <IconCell name="lock" gap={2} w={24} color="#55585d" size={22} sw={1.4} />
          <TextCell w={175} gap={1} $browser $size={11.8} $weight={400} $color="#4d5156" $sx={0.965}>
            <span style={{ color: "#25282c" }}>tradingview.com</span>/chart/pkJvJzdM/
          </TextCell>
          <IconCell name="camcorder" gap={710} color="#5a5d61" size={23} />
          <IconCell name="translate" gap={3} color="#5a5d61" />
          <IconCell name="share" gap={3} color="#5a5d61" />
          <IconCell name="star" gap={2} color="#1a6dd8" />
        </Omnibox>
        <IconCell name="viewer" gap={7} color="#2672d0" sw={1.4} />
        <IconCell name="puzzle" gap={3} color="#505356" />
        <IconCell name="panel" gap={3} color="#5a5d61" sw={1.3} />
        <Cell $w={24} $gap={3}>
          <svg width="19" height="19" viewBox="0 0 19 19"><circle cx="9.500" cy="9.500" r="9" fill="#777" /><path d="M4 5c1-3 9-4 12 0v7c-3 5-8 5-11 1z" fill="#c5c5c5" /><path d="M4 7h4M11 6.500l4-.5M5 9.500h3M12 9h3" stroke="#222" /><ellipse cx="10" cy="14" rx="3" ry="2.300" fill="#111" /></svg>
        </Cell>
        <IconCell name="kebab" gap={3} color="#4d5054" />
      </AddressRow>
      <TopBar>
        <Cell $w={22} $gap={11}><Avatar><svg width="12" height="12" viewBox="0 0 12 12"><path d="M4 2h4M3 5.500h6M2 8h2.500M5.500 8h1.500M8 8h2" stroke="#5fb0c2" strokeWidth="1.600" /></svg></Avatar></Cell>
        <Cell $w={18} $gap={19}>
          <svg width="18" height="18" viewBox="0 0 18 18"><circle cx="6.500" cy="11" r="4.500" fill="none" stroke="#d33653" strokeWidth="2" /><path d="M6.500 8v6M3.500 11h6M6.500 6V3.500" stroke="#d33653" strokeWidth="1.300" /><path d="M9 4.500h3M10.500 3v3M14 4.500h1.500M16 2.500c.8 1.500.5 3-.7 4.500" stroke="#d33653" strokeWidth="1.500" fill="none" /></svg>
        </Cell>
        <TextCell w={44} gap={3} $weight={600} $size={12} $color="#3252b8" $ls={-0.3} $sx={0.94}>CADCHF</TextCell>
        <IconCell name="circlePlus" gap={16} />
        <Rule $gap={8} />
        {intervals.map(([label, w, gap, color]) => <TextCell key={label} w={w} gap={gap} $size={11.8} $color={color} $weight={color ? 600 : 500} $ls={-0.1} $sx={0.87}>{label}</TextCell>)}
        <IconCell name="chevron" w={16} gap={6} size={22} />
        <Rule $gap={4} />
        <IconCell name="candles" gap={7} />
        <Rule $gap={7} />
        <IconCell name="indicators" gap={6} w={26} size={22} sw={1.2} />
        <TextCell w={52} gap={-1} $size={11.5} $ls={-0.2} $sx={0.94}>Indicators</TextCell>
        <IconCell name="chevron" w={16} gap={9} size={22} />
        <IconCell name="layouts" w={24} gap={4} size={22} />
        <Rule $gap={8} />
        <IconCell name="alarm" w={24} gap={6} size={24} />
        <TextCell w={26} gap={2} $size={11.5} $ls={-0.2} $sx={0.97}>Alert</TextCell>
        <IconCell name="rewind" w={24} gap={12} />
        <TextCell w={34} gap={2} $size={11.5} $ls={-0.2} $sx={0.94}>Replay</TextCell>
        <Rule $gap={11} />
        <IconCell name="undo" gap={7} />
        <IconCell name="redo" gap={7} color="#c2c4c9" />
        <IconCell name="square" gap={28} />
        <IconCell name="cloud" gap={7} size={19} />
        <TextCell w={53} gap={2} $size={11.5} $ls={-0.1}>Elite_Club</TextCell>
        <IconCell name="chevron" w={16} gap={6} size={22} />
        <IconCell name="search" gap={22} />
        <IconCell name="gear" gap={8} size={23} />
        <IconCell name="fullscreen" gap={8} size={26} />
        <IconCell name="camera" gap={7} />
        <Cell $w={85} $gap={5} $bg="#e0213f" $color="#fff">
          <Icon name="record" />
          <Label $color="#fff" $size={12} $weight={600} $sx={0.96} style={{ marginLeft: 4 }}>00:31</Label>
        </Cell>
        <IconCell name="pause" w={31} gap={2} bg="#353740" color="#fff" />
        <IconCell name="mic" w={31} gap={1} bg="#2f5df0" color="#fff" />
        <IconCell name="video" w={31} gap={2} bg="#353740" color="#fff" />
      </TopBar>
      <Divider />
      <Workspace>
        <MainColumn>
          <Chart />
          <RangeBar>
            {ranges.map(([label, w, gap]) => <TextCell key={label} w={w} gap={gap} $size={11.5} $ls={-0.3} $sx={0.9}>{label}</TextCell>)}
            <Rule $gap={14} />
            <IconCell name="gotoDate" gap={8} />
            <TextCell w={91} gap={754} $size={11.7} $ls={-0.1}>14:30:22 (UTC+2)</TextCell>
            <Rule $gap={13} />
            <TextCell w={11} gap={14} $size={11.3}>%</TextCell>
            <TextCell w={16} gap={12} $size={11.3}>log</TextCell>
            <TextCell w={23} gap={12} $size={11.3}>auto</TextCell>
          </RangeBar>
          <Divider $h={3} />
          <BottomTools>
            <DrawingPanel>
              <IconCell name="grip" w={14} size={20} />
              {drawTools.map((t, i) => <IconCell key={t} name={t} w={32.4} gap={i ? 0 : 4} color="#1d2029" />)}
              <IconCell name="cursor" w={32.4} color="#3b5ba9" size={22} />
            </DrawingPanel>
            <IconCell name="up" w={24} gap={503} />
            <IconCell name="fullscreen" w={24} gap={6} size={26} />
          </BottomTools>
        </MainColumn>
        <SideBar>
          {sideItems.map(([name, h, line]) => (
            <SideCell key={name} $h={h} $line={line}>
              <Icon name={name} size={compactIcons.includes(name) ? 20 : 21} sw={1.25} />
              {name === "alarmSide" && <Badge $top={6} $right={4}>2</Badge>}
              {name === "bell" && <Badge $top={9} $right={4} $pad={2}>2556</Badge>}
            </SideCell>
          ))}
        </SideBar>
        <FloatingBar>
          <IconCell name="grip" w={20} size={21} />
          <IconCell name="template" gap={5} w={24} size={22} sw={1.3} />
          <IconCell name="pencil" gap={8} w={24} size={24} />
          <IconCell name="line" gap={8} w={24} size={21} />
          <TextCell w={18} gap={1} $size={11.5} $sx={0.93}>1px</TextCell>
          <IconCell name="line" gap={15} w={24} size={23} />
          <IconCell name="gear" gap={9} w={24} size={23} />
          <IconCell name="alarmPlus" gap={8} w={24} size={23} />
          <IconCell name="unlock" gap={9} w={24} size={23} />
          <IconCell name="trash" gap={8} w={24} size={24} />
          <IconCell name="more" gap={9} w={24} size={22} sw={1.4} />
        </FloatingBar>
        <Watermark viewBox="0 0 46 25" aria-hidden="true">
          <path d="M0 1h18.500v23H9.500V10H0zM34 1h12l-9 23H27z" fill="#3d6df0" fillOpacity=".7" />
          <circle cx="26" cy="5.500" r="4.500" fill="#3d6df0" fillOpacity=".7" />
        </Watermark>
      </Workspace>
    </Screen>
  );
}
